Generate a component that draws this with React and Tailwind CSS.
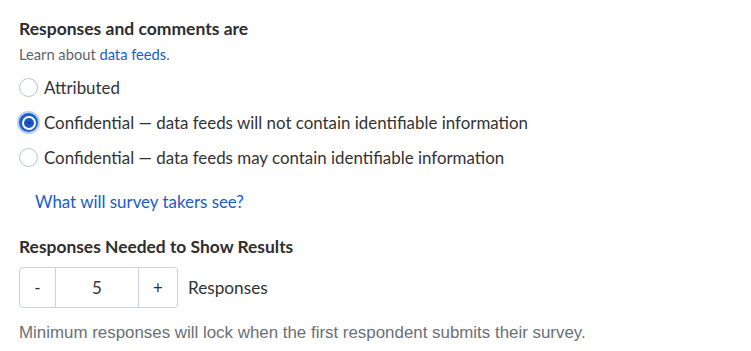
import React, { useState } from 'react'

const heading = "font-['Lato','Open_Sans',sans-serif]"

const options = [
  { value: 'attributed', label: 'Attributed' },
  { value: 'conf-not', label: 'Confidential — data feeds will not contain identifiable information' },
  { value: 'conf-may', label: 'Confidential — data feeds may contain identifiable information' },
]

function Radio({ checked }) {
  if (checked) {
    return (
      <span className="w-[19px] h-[19px] rounded-full bg-[#1f5fcc] shadow-[0_0_0_2px_rgba(96,150,240,0.45)] flex items-center justify-center shrink-0">
        <span className="w-[14px] h-[14px] rounded-full border-[2px] border-white bg-[#1a56c0] flex items-center justify-center">
          <span className="w-[2px] h-[2px] rounded-full bg-[#0d2f70]" />
        </span>
      </span>
    )
  }
  return <span className="w-[19px] h-[19px] rounded-full border border-[#b9c3d3] bg-white shrink-0" />
}

export default function App() {
  const [selected, setSelected] = useState('conf-not')
  const [count, setCount] = useState(5)

  return (
    <div className={`w-[751px] h-[351px] bg-white pl-[19px] pt-[19px] ${heading}`}>
      <h2 className="text-[17.5px] font-bold text-[#2e2e2e] leading-[20px]">Responses and comments are</h2>
      <p className="mt-[7px] text-[14.7px] text-[#5f6368] leading-[16px]">
        Learn about <span className="text-[#1a5cc8]">data feeds</span>.
      </p>

      <div className="mt-[16px] flex flex-col gap-[16px]">
        {options.map((o) => (
          <button
            key={o.value}
            onClick={() => setSelected(o.value)}
            className="flex items-center gap-[6px] h-[19px] text-left"
          >
            <Radio checked={selected === o.value} />
            <span className="text-[16.9px] text-[#333] leading-[19px]">{o.label}</span>
          </button>
        ))}
      </div>

      <a className="block mt-[25px] ml-[16px] text-[16.9px] text-[#1a5cc8] leading-[20px] cursor-pointer">
        What will survey takers see?
      </a>

      <h3 className="mt-[26px] text-[17.4px] font-bold text-[#2e2e2e] leading-[18px]">Responses Needed to Show Results</h3>

      <div className="mt-[11px] flex items-center">
        <div className="flex h-[41px] border border-[#c9d1dc] rounded-[4px] text-[16.9px] text-[#333]">
          <button onClick={() => setCount(Math.max(1, count - 1))} className="w-[36px] border-r border-[#c9d1dc] flex items-center justify-center">-</button>
          <div className="w-[83px] border-r border-[#c9d1dc] flex items-center justify-center">{count}</div>
          <button onClick={() => setCount(count + 1)} className="w-[38px] flex items-center justify-center">+</button>
        </div>
        <span className="ml-[10px] text-[17.2px] text-[#333]">Responses</span>
      </div>

      <p className="mt-[15px] text-[16.9px] text-[#6b6f75] leading-[20px] font-['Liberation_Sans',Arial,sans-serif]">
        Minimum responses will lock when the first respondent submits their survey.
      </p>
    </div>
  )
}
